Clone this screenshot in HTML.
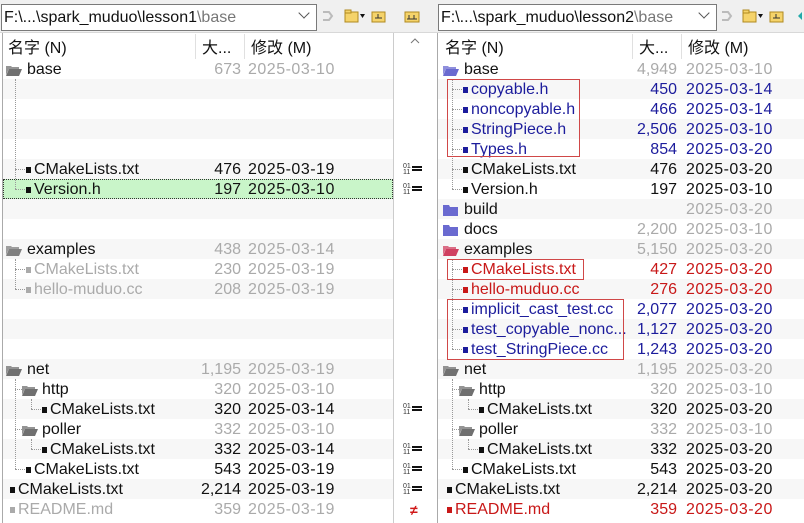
<!DOCTYPE html>
<html><head><meta charset="utf-8">
<style>
*{margin:0;padding:0;box-sizing:border-box}
body{width:804px;height:523px;overflow:hidden;background:#fff;position:relative;font-family:"Liberation Sans","Noto Sans CJK SC",sans-serif;font-size:16px;color:#111}
.a{position:absolute}
.tb{left:0;top:0;width:804px;height:33px;background:#f0f0f0;border-bottom:1px solid #d8d8d8}
.inp{top:4px;height:27px;background:#fff;border:1px solid #7a7a7a;line-height:25px;padding-left:2px;font-size:16px;color:#111;white-space:nowrap;overflow:hidden}
.inp span{color:#777}
.chev{top:9px;width:8px;height:8px;border-right:1px solid #555;border-bottom:1px solid #555;transform:rotate(45deg)}
.hd{top:36px;height:25px;line-height:25px;white-space:nowrap}
.sep{top:34px;width:1px;height:25px;background:#e0e0e0}
.band{height:20px;background:#f7f7f7}
.row{height:20px;line-height:20px;white-space:nowrap;margin-top:1px}
.dt{letter-spacing:0.5px}
.sz{text-align:right;width:60px;height:20px;line-height:20px;margin-top:1px}
.sq{display:inline-block;width:5px;height:6px;background:#111;margin-right:3px;vertical-align:1px}
.g{color:#aaa}.g .sq{background:#aaa}
.b{color:#1c1c9c}.b .sq{background:#1c1c9c}
.r{color:#c81818}.r .sq{background:#c81818}
.vl{border-left:1px dotted #999;width:1px}
.hl{border-top:1px dotted #999;height:1px}
.box{border:1px solid #d04848}
.eq{font-size:7px;line-height:6px;color:#333;width:8px}
.eqb{width:10px;height:5px;border-top:2px solid #111;border-bottom:2px solid #111}
</style></head><body>
<div class="a tb"></div>
<div class="a inp" style="left:1px;width:316px">F:\...\spark_muduo\lesson1<span>\base</span></div>
<div class="a chev" style="left:300px"></div>
<div class="a inp" style="left:438px;width:279px">F:\...\spark_muduo\lesson2<span>\base</span></div>
<div class="a chev" style="left:700px"></div>
<svg class="a" style="left:320px;top:8px" width="16" height="16"><path d="M3 4h6l3 4-3 4H3" fill="none" stroke="#bbb" stroke-width="2"/></svg>
<svg class="a" style="left:344px;top:8px" width="60" height="16"><rect x="1" y="4" width="13" height="10" fill="#f5d36a" stroke="#b08a20"/><rect x="1" y="2" width="6" height="3" fill="#f5d36a" stroke="#b08a20"/><path d="M16 6l5 0l-2.5 4z" fill="#111"/><rect x="28" y="4" width="13" height="10" fill="#f5d36a" stroke="#b08a20"/><path d="M31 10h7M34 6v4" stroke="#333"/></svg>
<svg class="a" style="left:404px;top:8px" width="16" height="16"><rect x="1" y="4" width="14" height="10" fill="#f5d36a" stroke="#b08a20"/><path d="M3 11h10M5 7v4M10 7v4" stroke="#333"/></svg>
<svg class="a" style="left:719px;top:8px" width="16" height="16"><path d="M3 4h6l3 4-3 4H3" fill="none" stroke="#bbb" stroke-width="2"/></svg>
<svg class="a" style="left:742px;top:8px" width="62" height="16"><rect x="1" y="4" width="13" height="10" fill="#f5d36a" stroke="#b08a20"/><rect x="1" y="2" width="6" height="3" fill="#f5d36a" stroke="#b08a20"/><path d="M16 6l5 0l-2.5 4z" fill="#111"/><rect x="28" y="4" width="13" height="10" fill="#f5d36a" stroke="#b08a20"/><path d="M31 10h7M34 6v4" stroke="#333"/><path d="M56 8l4-4v8z" fill="#2aa"/></svg>

<div class="a" style="left:2px;top:33px;width:1px;height:490px;background:#aaa"></div>
<div class="a" style="left:393px;top:33px;width:1px;height:490px;background:#ccc"></div>
<div class="a" style="left:437px;top:33px;width:1px;height:490px;background:#aaa"></div>

<div class="a band" style="left:3px;top:79px;width:390px"></div><div class="a band" style="left:438px;top:79px;width:366px"></div>
<div class="a band" style="left:3px;top:119px;width:390px"></div><div class="a band" style="left:438px;top:119px;width:366px"></div>
<div class="a band" style="left:3px;top:159px;width:390px"></div><div class="a band" style="left:438px;top:159px;width:366px"></div>
<div class="a band" style="left:3px;top:199px;width:390px"></div><div class="a band" style="left:438px;top:199px;width:366px"></div>
<div class="a band" style="left:3px;top:239px;width:390px"></div><div class="a band" style="left:438px;top:239px;width:366px"></div>
<div class="a band" style="left:3px;top:279px;width:390px"></div><div class="a band" style="left:438px;top:279px;width:366px"></div>
<div class="a band" style="left:3px;top:319px;width:390px"></div><div class="a band" style="left:438px;top:319px;width:366px"></div>
<div class="a band" style="left:3px;top:359px;width:390px"></div><div class="a band" style="left:438px;top:359px;width:366px"></div>
<div class="a band" style="left:3px;top:399px;width:390px"></div><div class="a band" style="left:438px;top:399px;width:366px"></div>
<div class="a band" style="left:3px;top:439px;width:390px"></div><div class="a band" style="left:438px;top:439px;width:366px"></div>
<div class="a band" style="left:3px;top:479px;width:390px"></div><div class="a band" style="left:438px;top:479px;width:366px"></div>
<div class="a" style="left:3px;top:179px;width:390px;height:20px;background:#c9f5c9;border:1px dotted #333"></div>

<div class="a hd" style="left:8px">名字 (N)</div><div class="a sep" style="left:195px"></div>
<div class="a hd" style="left:202px">大...</div><div class="a sep" style="left:244px"></div>
<div class="a hd" style="left:251px">修改 (M)</div>
<div class="a hd" style="left:445px">名字 (N)</div><div class="a sep" style="left:632px"></div>
<div class="a hd" style="left:639px">大...</div><div class="a sep" style="left:681px"></div>
<div class="a hd" style="left:688px">修改 (M)</div>
<svg class="a" style="left:410px;top:38px" width="10" height="6"><path d="M1 5l4-4 4 4" fill="none" stroke="#777"/></svg>

<div class="a vl" style="left:15px;top:79px;height:110px"></div>
<div class="a vl" style="left:15px;top:259px;height:30px"></div>
<div class="a vl" style="left:15px;top:379px;height:90px"></div>
<div class="a vl" style="left:31px;top:399px;height:10px"></div>
<div class="a vl" style="left:31px;top:439px;height:10px"></div>
<div class="a hl" style="left:15px;top:169px;width:10px"></div><div class="a hl" style="left:15px;top:189px;width:10px"></div>
<div class="a hl" style="left:15px;top:269px;width:10px"></div><div class="a hl" style="left:15px;top:289px;width:10px"></div>
<div class="a hl" style="left:15px;top:389px;width:7px"></div><div class="a hl" style="left:15px;top:429px;width:7px"></div><div class="a hl" style="left:15px;top:469px;width:10px"></div>
<div class="a hl" style="left:31px;top:409px;width:10px"></div><div class="a hl" style="left:31px;top:449px;width:10px"></div>
<div class="a vl" style="left:452px;top:79px;height:110px"></div>
<div class="a vl" style="left:452px;top:259px;height:90px"></div>
<div class="a vl" style="left:452px;top:379px;height:90px"></div>
<div class="a vl" style="left:468px;top:399px;height:10px"></div>
<div class="a vl" style="left:468px;top:439px;height:10px"></div>
<div class="a hl" style="left:452px;top:89px;width:10px"></div><div class="a hl" style="left:452px;top:109px;width:10px"></div><div class="a hl" style="left:452px;top:129px;width:10px"></div><div class="a hl" style="left:452px;top:149px;width:10px"></div><div class="a hl" style="left:452px;top:169px;width:10px"></div><div class="a hl" style="left:452px;top:189px;width:10px"></div>
<div class="a hl" style="left:452px;top:269px;width:10px"></div><div class="a hl" style="left:452px;top:289px;width:10px"></div><div class="a hl" style="left:452px;top:309px;width:10px"></div><div class="a hl" style="left:452px;top:329px;width:10px"></div><div class="a hl" style="left:452px;top:349px;width:10px"></div>
<div class="a hl" style="left:452px;top:389px;width:7px"></div><div class="a hl" style="left:452px;top:429px;width:7px"></div><div class="a hl" style="left:452px;top:469px;width:10px"></div>
<div class="a hl" style="left:468px;top:409px;width:10px"></div><div class="a hl" style="left:468px;top:449px;width:10px"></div>

<svg width="0" height="0" style="position:absolute"><defs>
<symbol id="fo" viewBox="0 0 16 12"><path d="M0 2h5l1 1h7v2H3L0 11z" fill="currentColor" opacity=".75"/><path d="M3 5h13l-3 7H0z" fill="currentColor"/></symbol>
<symbol id="fc" viewBox="0 0 16 12"><path d="M0 1h6l1 2h8v9H0z" fill="currentColor"/><rect x="0" y="4" width="15" height="8" fill="currentColor" opacity=".8"/></symbol>
</defs></svg>
<svg class="a" style="left:6px;top:64px;color:#707070" width="16" height="12"><use href="#fo"/></svg>
<svg class="a" style="left:6px;top:244px;color:#808080" width="16" height="12"><use href="#fo"/></svg>
<svg class="a" style="left:6px;top:364px;color:#707070" width="16" height="12"><use href="#fo"/></svg>
<svg class="a" style="left:22px;top:384px;color:#707070" width="16" height="12"><use href="#fo"/></svg>
<svg class="a" style="left:22px;top:424px;color:#707070" width="16" height="12"><use href="#fo"/></svg>
<svg class="a" style="left:443px;top:64px;color:#6a6ad0" width="16" height="12"><use href="#fo"/></svg>
<svg class="a" style="left:443px;top:204px;color:#6a6ad0" width="16" height="12"><use href="#fc"/></svg>
<svg class="a" style="left:443px;top:224px;color:#6a6ad0" width="16" height="12"><use href="#fc"/></svg>
<svg class="a" style="left:443px;top:244px;color:#d04060" width="16" height="12"><use href="#fo"/></svg>
<svg class="a" style="left:443px;top:364px;color:#707070" width="16" height="12"><use href="#fo"/></svg>
<svg class="a" style="left:459px;top:384px;color:#707070" width="16" height="12"><use href="#fo"/></svg>
<svg class="a" style="left:459px;top:424px;color:#707070" width="16" height="12"><use href="#fo"/></svg>

<div class="a row" style="left:27px;top:59px">base</div><div class="a sz g" style="left:181px;top:59px">673</div><div class="a row dt g" style="left:248px;top:59px">2025-03-10</div>
<div class="a row" style="left:26px;top:159px"><i class="sq"></i>CMakeLists.txt</div><div class="a sz" style="left:181px;top:159px">476</div><div class="a row dt" style="left:248px;top:159px">2025-03-19</div>
<div class="a row" style="left:26px;top:179px"><i class="sq"></i>Version.h</div><div class="a sz" style="left:181px;top:179px">197</div><div class="a row dt" style="left:248px;top:179px">2025-03-10</div>
<div class="a row" style="left:27px;top:239px">examples</div><div class="a sz g" style="left:181px;top:239px">438</div><div class="a row dt g" style="left:248px;top:239px">2025-03-14</div>
<div class="a row g" style="left:26px;top:259px"><i class="sq"></i>CMakeLists.txt</div><div class="a sz g" style="left:181px;top:259px">230</div><div class="a row dt g" style="left:248px;top:259px">2025-03-19</div>
<div class="a row g" style="left:26px;top:279px"><i class="sq"></i>hello-muduo.cc</div><div class="a sz g" style="left:181px;top:279px">208</div><div class="a row dt g" style="left:248px;top:279px">2025-03-19</div>
<div class="a row" style="left:27px;top:359px">net</div><div class="a sz g" style="left:181px;top:359px">1,195</div><div class="a row dt g" style="left:248px;top:359px">2025-03-19</div>
<div class="a row" style="left:42px;top:379px">http</div><div class="a sz g" style="left:181px;top:379px">320</div><div class="a row dt g" style="left:248px;top:379px">2025-03-10</div>
<div class="a row" style="left:42px;top:399px"><i class="sq"></i>CMakeLists.txt</div><div class="a sz" style="left:181px;top:399px">320</div><div class="a row dt" style="left:248px;top:399px">2025-03-14</div>
<div class="a row" style="left:42px;top:419px">poller</div><div class="a sz g" style="left:181px;top:419px">332</div><div class="a row dt g" style="left:248px;top:419px">2025-03-10</div>
<div class="a row" style="left:42px;top:439px"><i class="sq"></i>CMakeLists.txt</div><div class="a sz" style="left:181px;top:439px">332</div><div class="a row dt" style="left:248px;top:439px">2025-03-14</div>
<div class="a row" style="left:26px;top:459px"><i class="sq"></i>CMakeLists.txt</div><div class="a sz" style="left:181px;top:459px">543</div><div class="a row dt" style="left:248px;top:459px">2025-03-19</div>
<div class="a row" style="left:10px;top:479px"><i class="sq"></i>CMakeLists.txt</div><div class="a sz" style="left:181px;top:479px">2,214</div><div class="a row dt" style="left:248px;top:479px">2025-03-19</div>
<div class="a row g" style="left:10px;top:499px"><i class="sq"></i>README.md</div><div class="a sz g" style="left:181px;top:499px">359</div><div class="a row dt g" style="left:248px;top:499px">2025-03-19</div>

<div class="a row" style="left:464px;top:59px">base</div><div class="a sz g" style="left:617px;top:59px">4,949</div><div class="a row dt g" style="left:686px;top:59px">2025-03-10</div>
<div class="a row b" style="left:463px;top:79px"><i class="sq"></i>copyable.h</div><div class="a sz b" style="left:617px;top:79px">450</div><div class="a row dt b" style="left:686px;top:79px">2025-03-14</div>
<div class="a row b" style="left:463px;top:99px"><i class="sq"></i>noncopyable.h</div><div class="a sz b" style="left:617px;top:99px">466</div><div class="a row dt b" style="left:686px;top:99px">2025-03-14</div>
<div class="a row b" style="left:463px;top:119px"><i class="sq"></i>StringPiece.h</div><div class="a sz b" style="left:617px;top:119px">2,506</div><div class="a row dt b" style="left:686px;top:119px">2025-03-10</div>
<div class="a row b" style="left:463px;top:139px"><i class="sq"></i>Types.h</div><div class="a sz b" style="left:617px;top:139px">854</div><div class="a row dt b" style="left:686px;top:139px">2025-03-20</div>
<div class="a row" style="left:463px;top:159px"><i class="sq"></i>CMakeLists.txt</div><div class="a sz" style="left:617px;top:159px">476</div><div class="a row dt" style="left:686px;top:159px">2025-03-20</div>
<div class="a row" style="left:463px;top:179px"><i class="sq"></i>Version.h</div><div class="a sz" style="left:617px;top:179px">197</div><div class="a row dt" style="left:686px;top:179px">2025-03-10</div>
<div class="a row" style="left:464px;top:199px">build</div><div class="a row dt g" style="left:686px;top:199px">2025-03-20</div>
<div class="a row" style="left:464px;top:219px">docs</div><div class="a sz g" style="left:617px;top:219px">2,200</div><div class="a row dt g" style="left:686px;top:219px">2025-03-10</div>
<div class="a row" style="left:464px;top:239px">examples</div><div class="a sz g" style="left:617px;top:239px">5,150</div><div class="a row dt g" style="left:686px;top:239px">2025-03-20</div>
<div class="a row r" style="left:463px;top:259px"><i class="sq"></i>CMakeLists.txt</div><div class="a sz r" style="left:617px;top:259px">427</div><div class="a row dt r" style="left:686px;top:259px">2025-03-20</div>
<div class="a row r" style="left:463px;top:279px"><i class="sq"></i>hello-muduo.cc</div><div class="a sz r" style="left:617px;top:279px">276</div><div class="a row dt r" style="left:686px;top:279px">2025-03-20</div>
<div class="a row b" style="left:463px;top:299px"><i class="sq"></i>implicit_cast_test.cc</div><div class="a sz b" style="left:617px;top:299px">2,077</div><div class="a row dt b" style="left:686px;top:299px">2025-03-20</div>
<div class="a row b" style="left:463px;top:319px;width:166px;overflow:hidden"><i class="sq"></i>test_copyable_nonc...</div><div class="a sz b" style="left:617px;top:319px">1,127</div><div class="a row dt b" style="left:686px;top:319px">2025-03-20</div>
<div class="a row b" style="left:463px;top:339px"><i class="sq"></i>test_StringPiece.cc</div><div class="a sz b" style="left:617px;top:339px">1,243</div><div class="a row dt b" style="left:686px;top:339px">2025-03-20</div>
<div class="a row" style="left:464px;top:359px">net</div><div class="a sz g" style="left:617px;top:359px">1,195</div><div class="a row dt g" style="left:686px;top:359px">2025-03-20</div>
<div class="a row" style="left:479px;top:379px">http</div><div class="a sz g" style="left:617px;top:379px">320</div><div class="a row dt g" style="left:686px;top:379px">2025-03-10</div>
<div class="a row" style="left:479px;top:399px"><i class="sq"></i>CMakeLists.txt</div><div class="a sz" style="left:617px;top:399px">320</div><div class="a row dt" style="left:686px;top:399px">2025-03-20</div>
<div class="a row" style="left:479px;top:419px">poller</div><div class="a sz g" style="left:617px;top:419px">332</div><div class="a row dt g" style="left:686px;top:419px">2025-03-10</div>
<div class="a row" style="left:479px;top:439px"><i class="sq"></i>CMakeLists.txt</div><div class="a sz" style="left:617px;top:439px">332</div><div class="a row dt" style="left:686px;top:439px">2025-03-20</div>
<div class="a row" style="left:463px;top:459px"><i class="sq"></i>CMakeLists.txt</div><div class="a sz" style="left:617px;top:459px">543</div><div class="a row dt" style="left:686px;top:459px">2025-03-20</div>
<div class="a row" style="left:447px;top:479px"><i class="sq"></i>CMakeLists.txt</div><div class="a sz" style="left:617px;top:479px">2,214</div><div class="a row dt" style="left:686px;top:479px">2025-03-20</div>
<div class="a row r" style="left:447px;top:499px"><i class="sq"></i>README.md</div><div class="a sz r" style="left:617px;top:499px">359</div><div class="a row dt r" style="left:686px;top:499px">2025-03-20</div>

<div class="a box" style="left:447px;top:79px;width:133px;height:78px"></div>
<div class="a box" style="left:447px;top:259px;width:137px;height:21px"></div>
<div class="a box" style="left:447px;top:299px;width:177px;height:61px"></div>

<div class="a eq" style="left:403px;top:164px">01<br>11</div><div class="a eqb" style="left:412px;top:166px"></div>
<div class="a eq" style="left:403px;top:184px">01<br>11</div><div class="a eqb" style="left:412px;top:186px"></div>
<div class="a eq" style="left:403px;top:404px">01<br>11</div><div class="a eqb" style="left:412px;top:406px"></div>
<div class="a eq" style="left:403px;top:444px">01<br>11</div><div class="a eqb" style="left:412px;top:446px"></div>
<div class="a eq" style="left:403px;top:464px">01<br>11</div><div class="a eqb" style="left:412px;top:466px"></div>
<div class="a eq" style="left:403px;top:484px">01<br>11</div><div class="a eqb" style="left:412px;top:486px"></div>
<div class="a" style="left:410px;top:500px;line-height:20px;color:#d01818;font-weight:bold;font-size:14px">≠</div>
</body></html>
